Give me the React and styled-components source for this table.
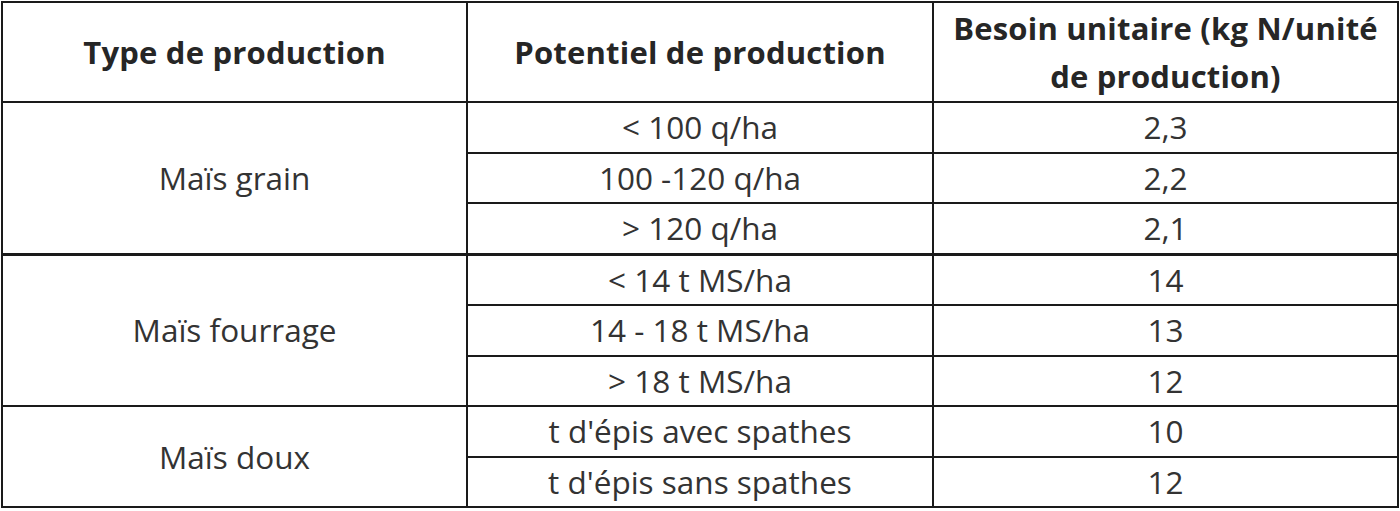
import React from "react";
import styled, { createGlobalStyle } from "styled-components";

const GlobalStyle = createGlobalStyle`
  html, body {
    margin: 0;
    padding: 0;
    background: #fff;
  }
  body {
    padding: 1px 0 0 1px;
    font-family: "Open Sans", "Noto Sans", sans-serif;
  }
`;

const rows = [
  {
    type: "Maïs grain",
    items: [
      ["< 100 q/ha", "2,3"],
      ["100 -120 q/ha", "2,2"],
      ["> 120 q/ha", "2,1"],
    ],
  },
  {
    type: "Maïs fourrage",
    items: [
      ["< 14 t MS/ha", "14"],
      ["14 - 18 t MS/ha", "13"],
      ["> 18 t MS/ha", "12"],
    ],
  },
  {
    type: "Maïs doux",
    items: [
      ["t d'épis avec spathes", "10"],
      ["t d'épis sans spathes", "12"],
    ],
  },
];

function App() {
  return (
    <>
      <GlobalStyle />
      <Table>
        <colgroup>
          <col style={{ width: 465 }} />
          <col style={{ width: 466 }} />
          <col style={{ width: 465 }} />
        </colgroup>
        <thead>
          <tr>
            <Head>Type de production</Head>
            <Head>Potentiel de production</Head>
            <Head>
              Besoin unitaire (kg N/unité
              <br />
              de production)
            </Head>
          </tr>
        </thead>
        {rows.map((group, gi) => (
          <tbody key={group.type}>
            {group.items.map((item, i) => (
              <tr key={item[0]}>
                {i === 0 && (
                  <Cell rowSpan={group.items.length} $thickTop={gi === 1}>
                    {group.type}
                  </Cell>
                )}
                <Cell $thickTop={gi === 1 && i === 0}>{item[0]}</Cell>
                <Cell $thickTop={gi === 1 && i === 0}>{item[1]}</Cell>
              </tr>
            ))}
          </tbody>
        ))}
      </Table>
    </>
  );
}

export default App;

// tableau des besoins
const Table = styled.table`
  width: 1396px;
  border-collapse: collapse;
  table-layout: fixed;
  border: 2px solid #1a1a1a;
`;

const Head = styled.th`
  height: 98px;
  padding: 0;
  border: 2px solid #1a1a1a;
  font-weight: 700;
  font-size: 31px;
  line-height: 48px;
  letter-spacing: 0.2px;
  color: #262626;
  text-align: center;
  vertical-align: middle;
`;

const Cell = styled.td`
  height: 48.5px;
  padding: 0;
  border: 2px solid #1a1a1a;
  border-top-width: ${(p) => (p.$thickTop ? "3px" : "2px")};
  font-weight: 400;
  font-size: 31.5px;
  line-height: 32px;
  color: #333;
  text-align: center;
  vertical-align: middle;
`;
